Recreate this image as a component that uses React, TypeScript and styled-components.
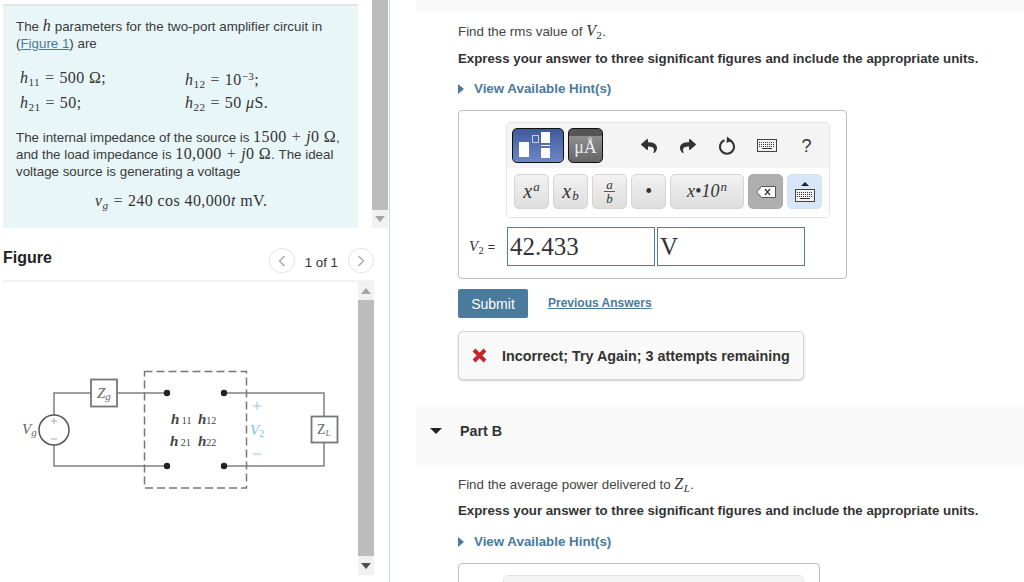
import React from "react";
import styled, { createGlobalStyle } from "styled-components";
import { FaReply, FaShare } from "react-icons/fa";

const GlobalStyle = createGlobalStyle`
  html, body { margin: 0; padding: 0; background: #fff; }
  body { font-family: "Liberation Sans", Arial, sans-serif; color: #333; overflow: hidden; }
`;

const Page = styled.div`
  display: flex; width: 1024px; height: 582px; overflow: hidden;
`;

/* left column */
const LeftColumn = styled.div`
  width: 389px; height: 582px; flex: none;
  border-right: 1px solid #c9d7e4;
`;
const TopRow = styled.div`
  display: flex; height: 228px; padding-left: 3px;
`;
const ProblemBox = styled.div`
  width: 355px; margin-top: 4px; height: 224px; box-sizing: border-box; flex: none;
  background: #e9f6f8; border-top: 2px solid #e2e4e6;
  padding: 12px 0 0 13px; font-size: 13.33px; line-height: 17px; color: #3a3a3a;
`;
const Para = styled.div<{ $top?: number }>`
  margin-top: ${({ $top }) => $top ?? 0}px;
`;
const FigLink = styled.a`
  color: #4a7a9c; text-decoration: underline;
`;
const M = styled.span<{ $size?: number }>`
  font-family: "Liberation Serif", "DejaVu Serif", serif;
  font-size: ${({ $size }) => $size ?? 16}px;
  line-height: 0;
  letter-spacing: .4px;
  color: #333;
  i { font-style: italic; }
  sub { font-size: 70%; line-height: 0; vertical-align: -3px; }
  sup { font-size: 70%; line-height: 0; vertical-align: 5px; }
`;
const Op = styled.span`
  margin: 0 5px; color: #555;
`;
const ParamGrid = styled.div`
  display: grid; grid-template-columns: 165px 150px; grid-auto-rows: 25px;
  margin: 15px 0 0 4px; align-items: center;
`;
const Centered = styled.div`
  margin: 13px 0 0 79px;
`;
const Scrollbar = styled.div<{ $left?: number; $height: number }>`
  width: 16px; height: ${({ $height }) => $height}px; flex: none;
  margin-left: ${({ $left }) => $left ?? 0}px;
  display: flex; flex-direction: column; background: #f1f1f1;
`;
const Thumb = styled.div`
  flex: 1; background: #bcbcbc;
`;
const ScrollArrow = styled.div<{ $size: number; $dark?: boolean }>`
  height: ${({ $size }) => $size}px; display: flex; align-items: center; justify-content: center;
  color: ${({ $dark }) => ($dark ? "#505050" : "#a3a3a3")}; flex: none;
`;
const FigureHeader = styled.div`
  display: flex; align-items: flex-start; width: 371px; height: 54px; margin-left: 3px;
  box-sizing: border-box; border-bottom: 2px solid #f3f3f3; padding-top: 20px;
`;
const FigureTitle = styled.h2`
  margin: 1px 0 0; font-size: 16px; line-height: 18px; font-weight: 700; color: #222; flex: 1;
`;
const PagerButton = styled.div`
  width: 26px; height: 25px; border: 1px solid #e4e4e4; border-radius: 50%;
  box-sizing: border-box; display: flex; align-items: center; justify-content: center;
`;
const PagerText = styled.span`
  font-size: 13.33px; line-height: 17px; color: #333; margin: 6px 10px 0 10px;
`;
const FigureRow = styled.div`
  display: flex; padding-left: 3px;
`;
const FigureCanvas = styled.svg`
  width: 355px; height: 293px; flex: none; display: block;
`;

/* right column */
const RightColumn = styled.div`
  flex: 1; padding-left: 26px; min-width: 0;
`;
const TopBand = styled.div`
  height: 13px; background: #f9f9f9;
`;
const PartBody = styled.div`
  padding-left: 42px;
`;
const Question = styled.div<{ $top: number }>`
  margin-top: ${({ $top }) => $top}px; font-size: 13.33px; line-height: 17px; color: #444;
`;
const Instruction = styled.div<{ $top: number }>`
  margin-top: ${({ $top }) => $top}px; font-size: 13.28px; line-height: 17px; font-weight: 700; color: #333;
`;
const Hint = styled.div<{ $top: number }>`
  margin-top: ${({ $top }) => $top}px; display: flex; align-items: center; gap: 10px;
  font-size: 13.33px; line-height: 17px; font-weight: 700; color: #4a7a9c;
`;
const HintArrow = styled.span`
  width: 0; height: 0; border-left: 6px solid #4a7a9c;
  border-top: 5px solid transparent; border-bottom: 5px solid transparent;
`;
const AnswerBox = styled.div<{ $w: number; $top: number; $pl: number }>`
  width: ${({ $w }) => $w}px; margin-top: ${({ $top }) => $top}px; box-sizing: border-box;
  border: 1px solid #bdbdbd; border-radius: 4px; padding: 11px 0 0 ${({ $pl }) => $pl}px; background: #fff;
`;
const Toolbar = styled.div<{ $w: number }>`
  width: ${({ $w }) => $w}px; box-sizing: border-box; border: 1px solid #e3e3e3; border-radius: 5px; overflow: hidden;
`;
const ToolbarTop = styled.div<{ $h?: number }>`
  display: flex; align-items: center; background: #f4f4f4;
  height: ${({ $h }) => $h ?? 45}px; padding: 0 0 0 5px;
`;
const TemplateButton = styled.div<{ $w: number; $dark?: boolean }>`
  width: ${({ $w }) => $w}px; height: 35px; box-sizing: border-box; border: 1px solid #111; border-radius: 5px;
  margin-right: 4px; display: flex; align-items: center; justify-content: center; flex: none;
  background: ${({ $dark }) =>
    $dark
      ? "linear-gradient(#555 0 7px, #8e8e8e 7px, #666)"
      : "linear-gradient(#3f5a9b, #6d87c6)"};
`;
const MicroText = styled.span`
  font-family: "Liberation Serif", serif; font-size: 18px; color: #ececec; margin-top: 4px;
`;
const ToolIcons = styled.div`
  display: flex; align-items: center; margin-left: 22px;
`;
const ToolIcon = styled.div<{ $w?: number }>`
  width: ${({ $w }) => $w ?? 39}px; display: flex; justify-content: center; align-items: center; color: #333;
`;
const HelpMark = styled.span`
  font-size: 18px; color: #333; margin-top: 2px;
`;
const ToolbarBottom = styled.div`
  display: flex; gap: 4px; padding: 6px 0 8px 7px; background: #fff;
`;
const KeyButton = styled.div<{ $w?: number; $size?: number; $variant?: "dark" | "blue" }>`
  width: ${({ $w }) => $w ?? 35}px; height: 35px; box-sizing: border-box; border-radius: 5px;
  border: 1px solid ${({ $variant }) => ($variant === "dark" ? "#aaa" : $variant === "blue" ? "#d3e0f2" : "#d4d4d4")};
  background: ${({ $variant }) =>
    $variant === "dark" ? "#afafaf" : $variant === "blue" ? "#d8e6fb" : "linear-gradient(#f2f2f2, #dedede)"};
  display: flex; align-items: center; justify-content: center; flex: none;
  font-family: "Liberation Serif", serif; font-style: italic; font-size: ${({ $size }) => $size ?? 20}px; color: #333;
  sup { font-size: 13px; line-height: 0; margin: -9px 0 0 1px; }
  sub { font-size: 13px; line-height: 0; margin: 9px 0 0 1px; }
`;
const Frac = styled.span`
  display: flex; flex-direction: column; align-items: center; font-size: 13px; line-height: 13px;
  span:first-child { border-bottom: 1px solid #555; padding: 0 2px; }
`;
const AnswerRow = styled.div`
  display: flex; align-items: center; margin: 9px 0 12px -37px;
`;
const AnswerLabel = styled.div`
  width: 38px; font-size: 12.5px; color: #333; flex: none; white-space: nowrap;
`;
const ValueField = styled.div`
  width: 148px; height: 39px; box-sizing: border-box; border: 1px solid #4f7d9c; margin-right: 2px;
  font-family: "Liberation Serif", serif; font-size: 25px; line-height: 37px; padding-left: 2px; color: #333;
`;
const ActionRow = styled.div`
  display: flex; align-items: center; margin-top: 10px;
`;
const SubmitButton = styled.div`
  width: 70px; height: 29px; border-radius: 2px; background: #4a7a9c; color: #fff; font-size: 14px;
  display: flex; align-items: center; justify-content: center;
`;
const PreviousLink = styled.a`
  margin: -1px 0 0 20px; font-size: 12px; font-weight: 700; color: #4a7a9c; text-decoration: underline;
`;
const Feedback = styled.div`
  width: 346px; height: 49px; margin-top: 13px; box-sizing: border-box; display: flex; align-items: center;
  padding-left: 13px; gap: 15px; border: 1px solid #d4d4d4; border-radius: 5px; background: #f9f9f9;
  box-shadow: 0 1px 2px rgba(0,0,0,.2); font-size: 14.33px; font-weight: 700; color: #333;
`;
const PartHeader = styled.div`
  height: 58px; margin-top: 27px; background: #f9f9f9; display: flex; align-items: center; padding: 0 0 10px 14px;
  box-sizing: border-box; font-size: 14.33px; font-weight: 700; color: #333;
`;
const PartArrow = styled.span`
  width: 0; height: 0; border-top: 6px solid #222; margin-right: 18px;
  border-left: 6px solid transparent; border-right: 6px solid transparent;
`;
const GhostButton = styled.div<{ $w: number }>`
  width: ${({ $w }) => $w}px; height: 35px; border: 1px solid #111; border-radius: 5px; margin-right: 8px;
  background: #5a74b2; box-sizing: border-box; flex: none; margin-top: 12px;
`;

const UpArrow = () => (
  <svg width="10" height="6" viewBox="0 0 10 6"><path d="M0 6 5 0l5 6z" fill="currentColor" /></svg>
);
const DownArrow = () => (
  <svg width="10" height="6" viewBox="0 0 10 6"><path d="M0 0l5 6 5-6z" fill="currentColor" /></svg>
);

const KeyboardKeys = () => (
  <>
    <rect x="0.5" y="0.5" width="19" height="12" fill="#f2f2f2" stroke="#444" />
    <path d="M2 3.5h16M2 5.5h16M2 7.5h16" stroke="#333" strokeWidth="1" strokeDasharray="1 1" fill="none" />
    <path d="M5 9.5h10" stroke="#333" strokeWidth="1" />
  </>
);

const KeyboardIcon = () => (
  <svg width="20" height="13" viewBox="0 0 20 13"><KeyboardKeys /></svg>
);

const ResetIcon = () => (
  <svg width="18" height="20" viewBox="0 0 18 20">
    <path d="M6.5 4.2a7 7 0 1 0 5 0" fill="none" stroke="#333" strokeWidth="2" />
    <path d="M9 0.5 14 4.5 8.5 7z" fill="#333" />
  </svg>
);

const TemplateIcon = () => (
  <svg width="44" height="28" viewBox="0 0 44 28">
    <rect x="3" y="10" width="10" height="15" fill="#fff" />
    <rect x="16.5" y="3.5" width="6" height="7" fill="none" stroke="#c7d2ea" />
    <rect x="25" y="0" width="9" height="11" fill="#fff" />
    <rect x="25" y="13" width="9" height="1" fill="#fff" />
    <rect x="25" y="16" width="9" height="10" fill="#fff" />
  </svg>
);

const BackspaceIcon = () => (
  <svg width="20" height="12" viewBox="0 0 20 12">
    <path d="M5.5 .5H19.5V11.5H5.5L.5 6z" fill="#fff" stroke="#555" />
    <path d="M9 3l5 6M14 3l-5 6" stroke="#333" strokeWidth="1.2" />
  </svg>
);

const WrongIcon = () => (
  <svg width="15" height="15" viewBox="0 0 15 15">
    <path d="M2 2l11 11M13 2 2 13" stroke="#c3272b" strokeWidth="4" />
  </svg>
);

const SerifText = styled.text`
  font-family: "Liberation Serif", serif; fill: #666;
`;

// coordinates in the viewBox are page pixels, easier to compare to the picture
const Circuit = () => (
  <FigureCanvas viewBox="3 282 355 293">
    <g stroke="#808080" strokeWidth="1.5" fill="none">
      <path d="M54 415V393H91M117 393H167M224 393H324V416M324 443V466H224M167 466H54V445" />
      <circle cx="54" cy="430" r="15" stroke="#555" />
      <rect x="91" y="379.5" width="26" height="27" strokeWidth="1.8" stroke="#777" />
      <rect x="311.5" y="416.5" width="26" height="26" strokeWidth="1.8" stroke="#777" />
      <path d="M144.5 371.5H246.5V488H144.5Z" strokeDasharray="8 4" stroke="#777" />
    </g>
    <path d="M51 421h6M54 418v6" stroke="#aaa" strokeWidth="1" />
    <path d="M51 439h6" stroke="#aaa" strokeWidth="1" />
    <g fill="#222">
      <circle cx="167" cy="393" r="3.2" />
      <circle cx="224" cy="393" r="3.2" />
      <circle cx="167" cy="466" r="3.2" />
      <circle cx="224" cy="466" r="3.2" />
    </g>
    <SerifText x="22" y="434" fontSize="15" fontStyle="italic">V<tspan fontSize="11" dy="2">g</tspan></SerifText>
    <SerifText x="97" y="398" fontSize="15" fontStyle="italic">Z<tspan fontSize="11" dy="2">g</tspan></SerifText>
    <SerifText x="317" y="434" fontSize="14">Z<tspan fontSize="9" dy="2" fontStyle="italic">L</tspan></SerifText>
    <g style={{ fontFamily: "Liberation Serif, serif" }} fill="#444">
      <text x="171" y="424" fontSize="15" fontStyle="italic" fontWeight="700">h<tspan fontSize="10" fontStyle="normal" fontWeight="400"> 11</tspan></text>
      <text x="198" y="424" fontSize="15" fontStyle="italic" fontWeight="700">h<tspan fontSize="10" fontStyle="normal" fontWeight="400">12</tspan></text>
      <text x="170" y="446" fontSize="15" fontStyle="italic" fontWeight="700">h<tspan fontSize="10" fontStyle="normal" fontWeight="400"> 21</tspan></text>
      <text x="198" y="446" fontSize="15" fontStyle="italic" fontWeight="700">h<tspan fontSize="10" fontStyle="normal" fontWeight="400">22</tspan></text>
    </g>
    <g style={{ fontFamily: "Liberation Serif, serif" }} fill="#7cc3e4">
      <text x="250" y="435" fontSize="15" fontStyle="italic">V<tspan fontSize="10" dy="2" fontStyle="normal">2</tspan></text>
    </g>
    <path d="M253 406h8M257 402v8M253 454h8" stroke="#8ccbe8" strokeWidth="1" />
  </FigureCanvas>
);

export default function App() {
  return (
    <Page>
      <GlobalStyle />
      <LeftColumn>
        <TopRow>
          <ProblemBox>
            <Para>
              The <M><i>h</i></M> parameters for the two-port amplifier circuit in<br />
              (<FigLink>Figure 1</FigLink>) are
            </Para>
            <ParamGrid>
              <M><i>h</i><sub>11</sub><Op>=</Op>500 Ω;</M>
              <M><i>h</i><sub>12</sub><Op>=</Op>10<sup>−3</sup>;</M>
              <M><i>h</i><sub>21</sub><Op>=</Op>50;</M>
              <M><i>h</i><sub>22</sub><Op>=</Op>50 <i>μ</i>S.</M>
            </ParamGrid>
            <Para $top={12}>
              The internal impedance of the source is <M>1500<Op>+</Op><i>j</i>0 Ω</M>,<br />
              and the load impedance is <M>10,000<Op>+</Op><i>j</i>0 Ω</M>. The ideal<br />
              voltage source is generating a voltage
            </Para>
            <Centered>
              <M><i>v</i><sub><i>g</i></sub><Op>=</Op>240 cos 40,000<i>t</i> mV.</M>
            </Centered>
          </ProblemBox>
          <Scrollbar $left={14} $height={228}>
            <Thumb />
            <ScrollArrow $size={18}><DownArrow /></ScrollArrow>
          </Scrollbar>
        </TopRow>
        <FigureHeader>
          <FigureTitle>Figure</FigureTitle>
          <PagerButton>
            <svg width="8" height="12" viewBox="0 0 8 12"><path d="M6.5 1 1.5 6l5 5" fill="none" stroke="#aaa" strokeWidth="1.4" /></svg>
          </PagerButton>
          <PagerText>1 of 1</PagerText>
          <PagerButton>
            <svg width="8" height="12" viewBox="0 0 8 12"><path d="M1.5 1l5 5-5 5" fill="none" stroke="#aaa" strokeWidth="1.4" /></svg>
          </PagerButton>
        </FigureHeader>
        <FigureRow>
          <Circuit />
          <Scrollbar $height={293}>
            <ScrollArrow $size={18}><UpArrow /></ScrollArrow>
            <Thumb />
            <ScrollArrow $size={19} $dark><DownArrow /></ScrollArrow>
          </Scrollbar>
        </FigureRow>
      </LeftColumn>

      <RightColumn>
        <TopBand />
        <PartBody>
          <Question $top={10}>Find the rms value of <M><i>V</i><sub>2</sub></M>.</Question>
          <Instruction $top={10}>Express your answer to three significant figures and include the appropriate units.</Instruction>
          <Hint $top={13}><HintArrow />View Available Hint(s)</Hint>
          <AnswerBox $w={389} $top={13} $pl={47}>
            <Toolbar $w={324}>
              <ToolbarTop>
                <TemplateButton $w={52}><TemplateIcon /></TemplateButton>
                <TemplateButton $w={35} $dark><MicroText>μÅ</MicroText></TemplateButton>
                <ToolIcons>
                  <ToolIcon><FaReply size={16} /></ToolIcon>
                  <ToolIcon><FaShare size={16} /></ToolIcon>
                  <ToolIcon><ResetIcon /></ToolIcon>
                  <ToolIcon $w={41}><KeyboardIcon /></ToolIcon>
                  <ToolIcon><HelpMark>?</HelpMark></ToolIcon>
                </ToolIcons>
              </ToolbarTop>
              <ToolbarBottom>
                <KeyButton>x<sup>a</sup></KeyButton>
                <KeyButton>x<sub>b</sub></KeyButton>
                <KeyButton><Frac><span>a</span><span>b</span></Frac></KeyButton>
                <KeyButton>•</KeyButton>
                <KeyButton $w={74} $size={18}>x•10<sup>n</sup></KeyButton>
                <KeyButton $variant="dark"><BackspaceIcon /></KeyButton>
                <KeyButton $variant="blue">
                  <svg width="20" height="22" viewBox="0 0 20 22">
                    <path d="M6 5l4-4 4 4z" fill="#222" />
                    <g transform="translate(0 8)"><KeyboardKeys /></g>
                  </svg>
                </KeyButton>
              </ToolbarBottom>
            </Toolbar>
            <AnswerRow>
              <AnswerLabel><M $size={15}><i>V</i><sub>2</sub></M> =</AnswerLabel>
              <ValueField>42.433</ValueField>
              <ValueField>V</ValueField>
            </AnswerRow>
          </AnswerBox>
          <ActionRow>
            <SubmitButton>Submit</SubmitButton>
            <PreviousLink>Previous Answers</PreviousLink>
          </ActionRow>
          <Feedback>
            <WrongIcon />
            Incorrect; Try Again; 3 attempts remaining
          </Feedback>
        </PartBody>
        <PartHeader><PartArrow />Part B</PartHeader>
        <PartBody>
          <Question $top={11}>Find the average power delivered to <M><i>Z</i><sub><i>L</i></sub></M>.</Question>
          <Instruction $top={9}>Express your answer to three significant figures and include the appropriate units.</Instruction>
          <Hint $top={14}><HintArrow />View Available Hint(s)</Hint>
          <AnswerBox $w={362} $top={13} $pl={44}>
            <Toolbar $w={301}>
              <ToolbarTop $h={60}>
                <GhostButton $w={48} />
                <GhostButton $w={31} />
              </ToolbarTop>
            </Toolbar>
          </AnswerBox>
        </PartBody>
      </RightColumn>
    </Page>
  );
}
